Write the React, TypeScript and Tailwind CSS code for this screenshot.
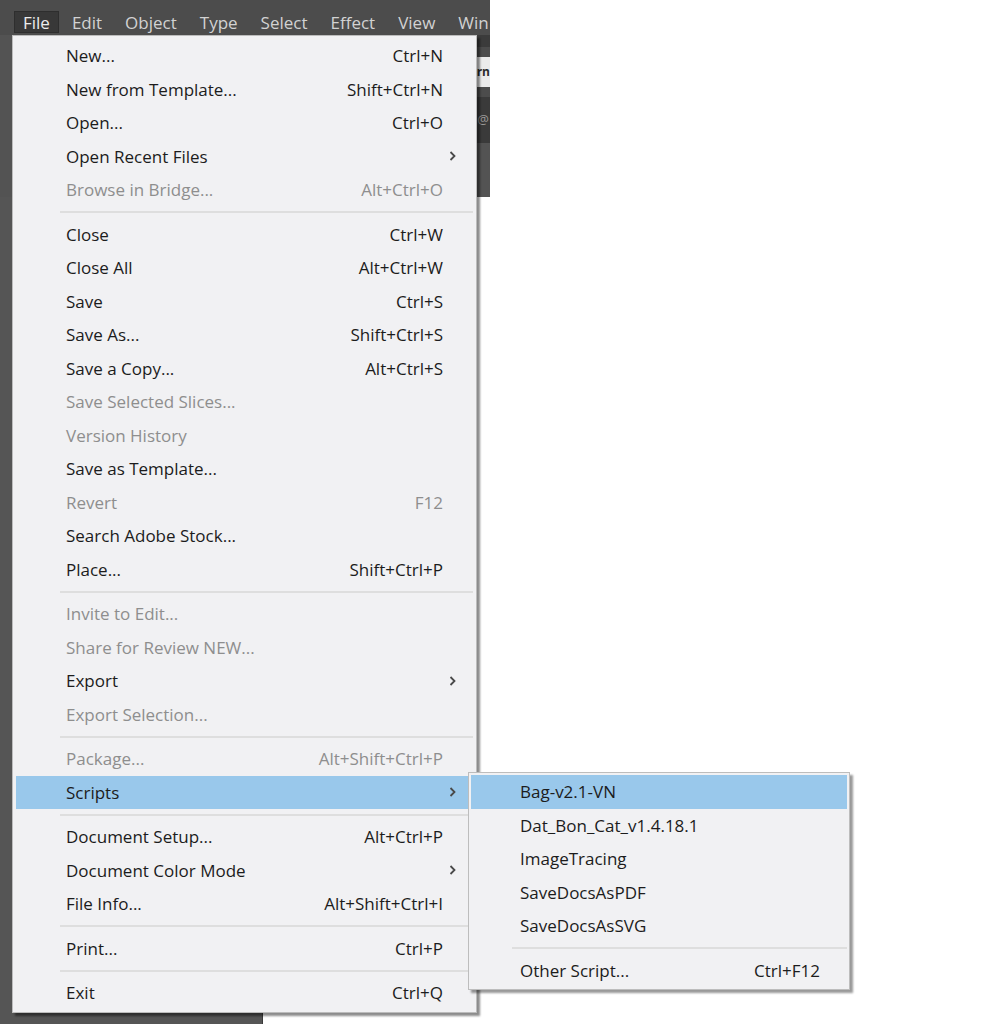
import React from 'react';

type Item = {
    label: string;
    shortcut?: string;
    disabled?: boolean;
    arrow?: boolean;
    active?: boolean;
};

type Entry = Item | 'sep';

const fileItems: Entry[] = [
    { label: 'New...', shortcut: 'Ctrl+N' },
    { label: 'New from Template...', shortcut: 'Shift+Ctrl+N' },
    { label: 'Open...', shortcut: 'Ctrl+O' },
    { label: 'Open Recent Files', arrow: true },
    { label: 'Browse in Bridge...', shortcut: 'Alt+Ctrl+O', disabled: true },
    'sep',
    { label: 'Close', shortcut: 'Ctrl+W' },
    { label: 'Close All', shortcut: 'Alt+Ctrl+W' },
    { label: 'Save', shortcut: 'Ctrl+S' },
    { label: 'Save As...', shortcut: 'Shift+Ctrl+S' },
    { label: 'Save a Copy...', shortcut: 'Alt+Ctrl+S' },
    { label: 'Save Selected Slices...', disabled: true },
    { label: 'Version History', disabled: true },
    { label: 'Save as Template...' },
    { label: 'Revert', shortcut: 'F12', disabled: true },
    { label: 'Search Adobe Stock...' },
    { label: 'Place...', shortcut: 'Shift+Ctrl+P' },
    'sep',
    { label: 'Invite to Edit...', disabled: true },
    { label: 'Share for Review NEW...', disabled: true },
    { label: 'Export', arrow: true },
    { label: 'Export Selection...', disabled: true },
    'sep',
    { label: 'Package...', shortcut: 'Alt+Shift+Ctrl+P', disabled: true },
    { label: 'Scripts', arrow: true, active: true },
    'sep',
    { label: 'Document Setup...', shortcut: 'Alt+Ctrl+P' },
    { label: 'Document Color Mode', arrow: true },
    { label: 'File Info...', shortcut: 'Alt+Shift+Ctrl+I' },
    'sep',
    { label: 'Print...', shortcut: 'Ctrl+P' },
    'sep',
    { label: 'Exit', shortcut: 'Ctrl+Q' },
];

const scriptItems: Entry[] = [
    { label: 'Bag-v2.1-VN', active: true },
    { label: 'Dat_Bon_Cat_v1.4.18.1' },
    { label: 'ImageTracing' },
    { label: 'SaveDocsAsPDF' },
    { label: 'SaveDocsAsSVG' },
    'sep',
    { label: 'Other Script...', shortcut: 'Ctrl+F12' },
];

const menuBar = ['File', 'Edit', 'Object', 'Type', 'Select', 'Effect', 'View', 'Win'];

const Chevron = () => (
    <svg width="7" height="11" viewBox="0 0 7 11" className="absolute right-[17px] top-1/2 -translate-y-1/2">
        <path d="M1.5 1.5 L5.5 5.5 L1.5 9.5" fill="none" stroke="#4a4a4a" strokeWidth="1.8" />
    </svg>
);

const ScriptsMenu = () => (
    <div className="absolute left-[452px] top-[-3.5px] z-10 w-[382px] border border-[#bdbdbd] bg-[#f1f1f3] p-[2px] shadow-[3px_3px_2px_rgba(0,0,0,0.4)]">
        {scriptItems.map((it, i) =>
            it === 'sep' ? (
                <div key={i} className="flex h-[11px] items-center pl-[41px]">
                    <div className="h-[2px] w-full bg-[#dedede]" />
                </div>
            ) : (
                <div
                    key={i}
                    className={`flex h-[33.5px] items-center pl-[49px] pr-[27px] text-[#1c1c1c] ${it.active ? 'bg-[#99c8eb]' : ''}`}
                >
                    <span>{it.label}</span>
                    {it.shortcut && <span className="ml-auto">{it.shortcut}</span>}
                </div>
            )
        )}
    </div>
);

const FileMenu = () => (
    <div className="absolute left-[12px] top-[35px] w-[465px] border border-[#bcbcbc] bg-[#f1f1f3] px-[3px] pt-[3px] pb-[2px] shadow-[3px_3px_2px_rgba(0,0,0,0.45)]">
        {fileItems.map((it, i) =>
            it === 'sep' ? (
                <div key={i} className="flex h-[11px] items-center pl-[44px]">
                    <div className="h-[2px] w-full bg-[#dedede]" />
                </div>
            ) : (
                <div
                    key={i}
                    className={`relative flex h-[33.5px] items-center pl-[50px] pr-[30px] ${it.disabled ? 'text-[#8e8e8e]' : 'text-[#1c1c1c]'} ${it.active ? 'bg-[#99c8eb]' : ''}`}
                >
                    <span>{it.label}</span>
                    {it.shortcut && <span className="ml-auto">{it.shortcut}</span>}
                    {it.arrow && <Chevron />}
                    {it.active && <ScriptsMenu />}
                </div>
            )
        )}
    </div>
);

export default function App() {
    return (
        <div className="relative h-[1024px] w-[981px] overflow-hidden bg-white font-['Open_Sans',sans-serif] text-[17px]">
            {/* app window behind the menu */}
            <div className="flex h-full flex-col">
                <div className="flex h-[197px] w-[490px] flex-col bg-[#535353]">
                    <div className="flex h-[35px] items-start gap-[3px] overflow-hidden bg-[#4c4c4c] pl-[14px] pt-[11px]">
                        {menuBar.map((m) => (
                            <div
                                key={m}
                                className={`flex h-[22px] shrink-0 items-center leading-none ${m === 'File' ? 'border border-[#2e2e2e] bg-[#383838] px-[8px] text-[#ececec]' : 'px-[10px] text-[#d2d2d2]'}`}
                            >
                                {m}
                            </div>
                        ))}
                    </div>
                    <div className="flex flex-1">
                        <div className="flex-1" />
                        <div className="flex w-[20px] flex-col overflow-hidden">
                            <div className="h-[12px] bg-[#3b3b3b]" />
                            <div className="h-[10px] bg-[#4c4c4c]" />
                            <div className="flex h-[30px] items-center justify-end bg-[#ebebeb] text-[12px] font-bold text-[#2a2a2a]">rn</div>
                            <div className="h-[10px] bg-[#4c4c4c]" />
                            <div className="flex h-[46px] items-center justify-end bg-[#3a3a3a] pr-[1px] text-[13px] text-[#9a9a9a]">@</div>
                            <div className="flex-1 bg-[#535353]" />
                        </div>
                    </div>
                </div>
                <div className="w-[263px] flex-1 border-r border-[#3a3a3a] bg-[#555555]" />
            </div>

            <FileMenu />
        </div>
    );
}
